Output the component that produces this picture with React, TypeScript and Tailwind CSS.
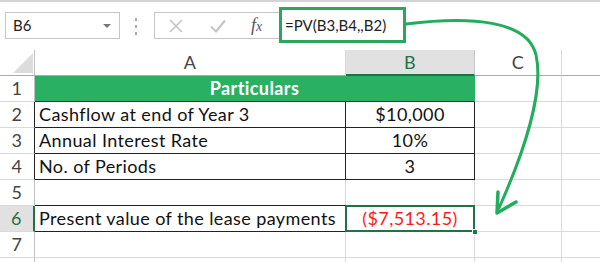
import React from "react";

const G = "border-[#d9d9d9]";

function RowNum({ n, active, dark }: { n?: number; active?: boolean; dark?: boolean }) {
  return (
    <div
      className={`flex items-center justify-center border-b border-b-[#d9d9d9] border-r ${
        active ? "bg-[#e1e1e1] text-[#217346] border-r-2 border-r-[#217346]" : dark ? "text-[#444] border-r-[#222]" : "text-[#444] border-r-[#bfbfbf]"
      }`}
    >
      {n}
    </div>
  );
}

export default function App() {
  return (
    <div
      className="relative w-[600px] h-[262px] overflow-hidden bg-white text-[18px] tracking-[0.4px] text-[#111]"
      style={{ fontFamily: "Lato, 'Liberation Sans', sans-serif" }}
    >
      <div className="h-[2px] bg-[#d3d3d3]" />
      {/* formula bar */}
      <div className="flex items-start h-[48px] tracking-normal">
        <div className="ml-[5px] mt-[10px] w-[115px] h-[27px] border border-[#c6c6c6] flex items-center pl-[7px] pr-[8px] text-[15px] text-[#222]">
          <span className="flex-1">B6</span>
          <span className="w-0 h-0 border-l-[4px] border-r-[4px] border-t-[4px] border-l-transparent border-r-transparent border-t-[#777]" />
        </div>
        <div className="ml-[15px] mt-[16px] flex flex-col gap-[4px]">
          <div className="w-[2px] h-[3px] bg-[#aaa]" />
          <div className="w-[2px] h-[3px] bg-[#aaa]" />
          <div className="w-[2px] h-[3px] bg-[#aaa]" />
        </div>
        <div className="ml-[17px] mt-[10px] w-[125px] h-[27px] border border-[#c6c6c6] border-r-0 flex items-center">
          <svg width="16" height="16" viewBox="0 0 16 16" className="ml-[13px]">
            <path d="M2 2 L14 14 M14 2 L2 14" stroke="#c4c4c4" strokeWidth="1.6" fill="none" />
          </svg>
          <svg width="18" height="16" viewBox="0 0 18 16" className="ml-[25px]">
            <path d="M2 8.5 L7 13.5 L16 2.5" stroke="#c4c4c4" strokeWidth="2" fill="none" />
          </svg>
          <span
            className="ml-[24px] text-[18px] italic text-[#555]"
            style={{ fontFamily: "'Liberation Serif', serif" }}
          >
            f<span className="text-[14px]">x</span>
          </span>
        </div>
        <div className="mt-[5px] w-[127px] h-[36px] border-[3px] border-[#2ba65c] flex items-center pl-[3px] text-[15px] text-[#222]">
          =PV(B3,B4,,B2)
        </div>
      </div>
      {/* grid */}
      <div className="grid grid-cols-[35px_311px_129px_87px_38px] grid-rows-[26px_repeat(8,26px)]">
        {/* header */}
        <div className="relative border-r border-r-[#bfbfbf] border-b border-b-[#ababab]">
          <svg width="20" height="20" viewBox="0 0 20 20" className="absolute left-[13px] top-[3px]">
            <polygon points="0,20 20,0 20,20" fill="#dcdcdc" />
          </svg>
        </div>
        <div className={`flex items-center justify-center text-[#444] border-r ${G} border-b border-b-[#ababab]`}>A</div>
        <div className="flex items-center justify-center bg-[#e1e1e1] text-[#217346] border-r border-r-[#c6c6c6] border-b-2 border-b-[#217346]">B</div>
        <div className={`flex items-center justify-center text-[#444] border-r ${G} border-b border-b-[#ababab]`}>C</div>
        <div className="border-b border-b-[#ababab]" />

        {/* row 1 */}
        <RowNum n={1} />
        <div className="col-span-2 flex items-center justify-center bg-[#2ab063] text-white font-bold border-b border-b-[#333] border-r border-r-[#2ab063]">
          Particulars
        </div>
        <div className={`border-r border-b ${G}`} />
        <div className={`border-b ${G}`} />

        {/* rows 2-4 */}
        {[
          ["Cashflow at end of Year 3", "$10,000"],
          ["Annual Interest Rate", "10%"],
          ["No. of Periods", "3"],
        ].map(([a, b], i) => (
          <React.Fragment key={i}>
            <RowNum n={i + 2} dark />
            <div className="flex items-center pl-[4px] border-r border-r-[#222] border-b border-b-[#222]">{a}</div>
            <div className="flex items-center justify-center border-r border-r-[#222] border-b border-b-[#222]">{b}</div>
            <div className={`border-r border-b ${G}`} />
            <div className={`border-b ${G}`} />
          </React.Fragment>
        ))}

        {/* row 5 */}
        <RowNum n={5} />
        <div className="border-r border-r-[#d9d9d9] border-b border-b-[#222]" />
        <div className={`border-r border-b ${G}`} />
        <div className={`border-r border-b ${G}`} />
        <div className={`border-b ${G}`} />

        {/* row 6 */}
        <RowNum n={6} active />
        <div className="flex items-center pl-[4px] border-r border-r-[#222] border-b border-b-[#222] whitespace-nowrap">
          Present value of the lease payments
        </div>
        <div className="relative flex items-center justify-center text-[#ff1a1a] border-b border-b-[#d9d9d9] border-r border-r-[#d9d9d9]">
          <div className="absolute -left-[1px] -top-[1px] -right-[1px] -bottom-[1px] border-2 border-[#217346]" />
          ($7,513.15)
          <div className="absolute -right-[4px] -bottom-[4px] w-[6px] h-[6px] bg-[#217346] border border-white" />
        </div>
        <div className={`border-r border-b ${G}`} />
        <div className={`border-b ${G}`} />

        {/* rows 7-8 */}
        {[7, 8].map((n) => (
          <React.Fragment key={n}>
            <RowNum n={n === 7 ? 7 : undefined} />
            <div className={`border-r border-b ${G}`} />
            <div className={`border-r border-b ${G}`} />
            <div className={`border-r border-b ${G}`} />
            <div className={`border-b ${G}`} />
          </React.Fragment>
        ))}
      </div>

      {/* arrow */}
      <svg className="absolute left-0 top-0 pointer-events-none" width="600" height="262" viewBox="0 0 600 262">
        <path
          d="M406 24 C 470 16, 528 20, 536 55 C 544 90, 525 150, 499 208"
          stroke="#23ac5c"
          strokeWidth="3"
          fill="none"
          strokeLinecap="round"
        />
        <path
          d="M498 192 L497 213 L516 202"
          stroke="#23ac5c"
          strokeWidth="3.5"
          fill="none"
          strokeLinecap="round"
          strokeLinejoin="round"
        />
      </svg>
    </div>
  );
}
